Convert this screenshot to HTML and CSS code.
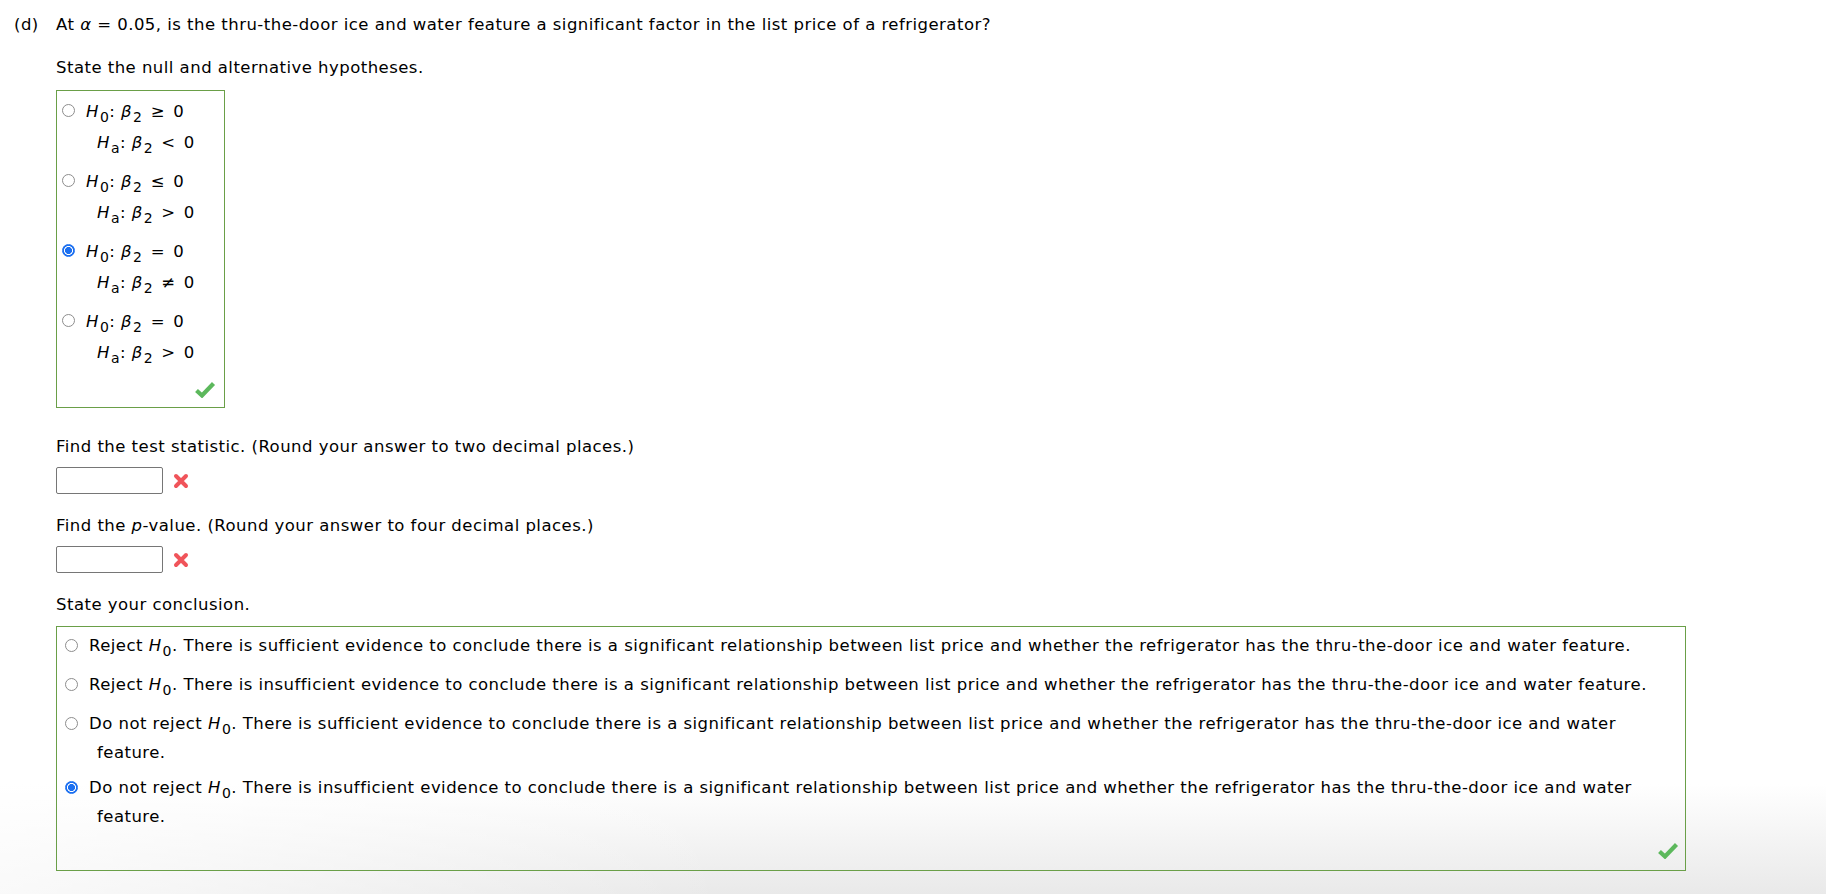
FILE: index.html
```html
<!DOCTYPE html>
<html>
<head>
<meta charset="utf-8">
<link rel="stylesheet" href="styles.css">
</head>
<body>
<div class="part">
  <div class="part-head">
    <span class="part-label">(d)</span>
    <span class="part-text">At <i class="m">α</i> = 0.05, is the thru-the-door ice and water feature a significant factor in the list price of a refrigerator?</span>
  </div>
  <div class="part-body">
    <p class="prompt">State the null and alternative hypotheses.</p>
    <div class="answer-box hyp-box">
      <label class="hyp">
        <span class="radio"></span>
        <span class="hyp-lines">
          <span class="h0"><i class="m">H</i><sub>0</sub>: <i class="m">β</i><sub>2</sub> <span class="rel">≥</span> 0</span>
          <span class="ha"><i class="m">H</i><sub>a</sub>: <i class="m">β</i><sub>2</sub> <span class="rel">&lt;</span> 0</span>
        </span>
      </label>
      <label class="hyp">
        <span class="radio"></span>
        <span class="hyp-lines">
          <span class="h0"><i class="m">H</i><sub>0</sub>: <i class="m">β</i><sub>2</sub> <span class="rel">≤</span> 0</span>
          <span class="ha"><i class="m">H</i><sub>a</sub>: <i class="m">β</i><sub>2</sub> <span class="rel">&gt;</span> 0</span>
        </span>
      </label>
      <label class="hyp">
        <span class="radio checked"></span>
        <span class="hyp-lines">
          <span class="h0"><i class="m">H</i><sub>0</sub>: <i class="m">β</i><sub>2</sub> <span class="rel">=</span> 0</span>
          <span class="ha"><i class="m">H</i><sub>a</sub>: <i class="m">β</i><sub>2</sub> <span class="rel">≠</span> 0</span>
        </span>
      </label>
      <label class="hyp">
        <span class="radio"></span>
        <span class="hyp-lines">
          <span class="h0"><i class="m">H</i><sub>0</sub>: <i class="m">β</i><sub>2</sub> <span class="rel">=</span> 0</span>
          <span class="ha"><i class="m">H</i><sub>a</sub>: <i class="m">β</i><sub>2</sub> <span class="rel">&gt;</span> 0</span>
        </span>
      </label>
      <div class="mark-row hyp-mark">
        <svg class="check" width="22" height="17" viewBox="0 0 22 17"><path d="M2.5 9.5 L8 14.5 L19.5 2.5" fill="none" stroke="#5cb85c" stroke-width="4.2" stroke-linejoin="miter"/></svg>
      </div>
    </div>

    <p class="prompt gap-top">Find the test statistic. (Round your answer to two decimal places.)</p>
    <div class="input-row">
      <span class="text-input"></span>
      <svg class="cross" width="16" height="16" viewBox="0 0 16 16"><path d="M3 3 L13 13 M13 3 L3 13" stroke="#f0545a" stroke-width="4" stroke-linecap="round"/></svg>
    </div>

    <p class="prompt after-input">Find the <i class="m">p</i>-value. (Round your answer to four decimal places.)</p>
    <div class="input-row">
      <span class="text-input"></span>
      <svg class="cross" width="16" height="16" viewBox="0 0 16 16"><path d="M3 3 L13 13 M13 3 L3 13" stroke="#f0545a" stroke-width="4" stroke-linecap="round"/></svg>
    </div>

    <p class="prompt before-box">State your conclusion.</p>
    <div class="answer-box concl-box">
      <label class="concl">
        <span class="radio"></span>
        <span class="concl-text">Reject <i class="m">H</i><sub>0</sub>. There is sufficient evidence to conclude there is a significant relationship between list price and whether the refrigerator has the thru-the-door ice and water feature.</span>
      </label>
      <label class="concl">
        <span class="radio"></span>
        <span class="concl-text">Reject <i class="m">H</i><sub>0</sub>. There is insufficient evidence to conclude there is a significant relationship between list price and whether the refrigerator has the thru-the-door ice and water feature.</span>
      </label>
      <label class="concl wrapped">
        <span class="radio"></span>
        <span class="concl-text">Do not reject <i class="m">H</i><sub>0</sub>. There is sufficient evidence to conclude there is a significant relationship between list price and whether the refrigerator has the thru-the-door ice and water <span class="tail">feature.</span></span>
      </label>
      <label class="concl wrapped">
        <span class="radio checked"></span>
        <span class="concl-text">Do not reject <i class="m">H</i><sub>0</sub>. There is insufficient evidence to conclude there is a significant relationship between list price and whether the refrigerator has the thru-the-door ice and water <span class="tail">feature.</span></span>
      </label>
      <div class="mark-row concl-mark">
        <svg class="check" width="22" height="17" viewBox="0 0 22 17"><path d="M2.5 9.5 L8 14.5 L19.5 2.5" fill="none" stroke="#5cb85c" stroke-width="4.2" stroke-linejoin="miter"/></svg>
      </div>
    </div>
  </div>
</div>
</body>
</html>
```

FILE: styles.css
```css
html {
  margin: 0;
  padding: 0;
  background: #ffffff;
}
body {
  margin: 0;
  padding: 0;
  font-family: "DejaVu Sans", Verdana, sans-serif;
  font-size: 16.5px;
  letter-spacing: 0.47px;
  line-height: 29px;
  color: #000;
  min-height: 894px;
  overflow: hidden;
  background:
    linear-gradient(to right, rgba(255,255,255,0.75), rgba(255,255,255,0) 40%) left bottom / 100% 110px no-repeat,
    linear-gradient(to bottom, #ffffff, #e9e9e9) left bottom / 100% 110px no-repeat,
    #ffffff;
}
.m {
  font-family: "DejaVu Sans", Verdana, sans-serif;
  font-style: italic;
}
sub {
  font-size: 14px;
  line-height: 0;
  vertical-align: -5px;
  margin-left: 1px;
}
.rel {
  margin: 0 2.5px;
}
.part {
  padding: 10px 0 0 14px;
}
.part-head {
  display: flex;
}
.part-label {
  width: 42px;
  flex: none;
}
.part-body {
  padding-left: 42px;
}
.prompt {
  margin: 14px 0 8px;
}
.prompt.gap-top {
  margin-top: 24.5px;
  margin-bottom: 5.5px;
}
.prompt.after-input {
  margin-top: 17.5px;
  margin-bottom: 5.5px;
}
.prompt.before-box {
  margin-top: 17.5px;
  margin-bottom: 7px;
}
.answer-box {
  border: 1px solid #6a9f48;
  box-sizing: border-box;
}
.hyp-box {
  width: 169px;
  padding: 5px 0 0 5px;
}
.hyp {
  display: flex;
  align-items: flex-start;
  margin-bottom: 8px;
}
.radio {
  width: 13px;
  height: 13px;
  border-radius: 50%;
  border: 1px solid #8d8d8d;
  box-sizing: border-box;
  background: #fff;
  flex: none;
  margin-top: 8px;
}
.radio.checked {
  border: 1px solid #1b6ff0;
  background: radial-gradient(circle, #1b6ff0 0 3.2px, #fff 3.8px 4.2px, #1b6ff0 4.8px);
}
.hyp .radio {
  margin-right: 11px;
}
.hyp-lines {
  display: flex;
  flex-direction: column;
  line-height: 31px;
}
.ha {
  padding-left: 11px;
}
.mark-row {
  display: flex;
  justify-content: flex-end;
}
.hyp-mark {
  margin-top: 12.5px;
  padding: 0 8px 9px 0;
}
.check {
  display: block;
}
.input-row {
  display: flex;
  align-items: center;
  gap: 10px;
}
.text-input {
  width: 107px;
  height: 27px;
  box-sizing: border-box;
  border: 1px solid #767676;
  border-radius: 2px;
  background: #fff;
}
.cross {
  display: block;
  margin-top: 2px;
}
.concl-box {
  width: 1630px;
  padding: 4px 25px 0 8px;
}
.concl {
  display: flex;
  align-items: flex-start;
  margin-bottom: 10px;
}
.concl.wrapped {
  margin-bottom: 6px;
}
.concl .radio {
  margin-right: 11px;
}
.concl-text {
  display: block;
  padding-left: 8px;
  text-indent: -8px;
}
.concl-mark {
  margin-right: -19px;
  margin-top: 11px;
  padding-bottom: 10.5px;
}
```
